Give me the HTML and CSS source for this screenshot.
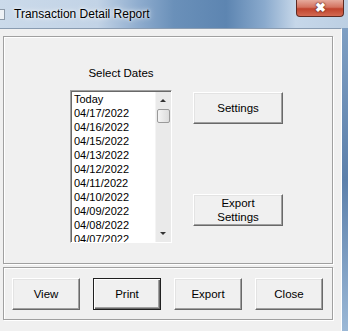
FILE: index.html
```html
<html lang="en">
<head>
    <meta charset="UTF-8">
    <title>Transaction Detail Report</title>
    <link rel="stylesheet" href="styles.css">
</head>
<body>
    <div class="titlebar">
        <div class="app-icon"></div>
        <div class="title-text">Transaction Detail Report</div>
        <div class="close-btn">&#10006;</div>
    </div>
    <div class="frame">
        <div class="window-body">
            <div class="group top-group">
                <div class="dates-col">
                    <div class="dates-label">Select Dates</div>
                    <div class="listbox">
                        <ul class="dates">
                            <li>Today</li>
                            <li>04/17/2022</li>
                            <li>04/16/2022</li>
                            <li>04/15/2022</li>
                            <li>04/13/2022</li>
                            <li>04/12/2022</li>
                            <li>04/11/2022</li>
                            <li>04/10/2022</li>
                            <li>04/09/2022</li>
                            <li>04/08/2022</li>
                            <li>04/07/2022</li>
                        </ul>
                        <div class="scrollbar">
                            <div class="arrow up"></div>
                            <div class="thumb"></div>
                            <div class="track"></div>
                            <div class="arrow down"></div>
                        </div>
                    </div>
                </div>
                <div class="side-col">
                    <button class="btn side-btn">Settings</button>
                    <button class="btn side-btn export-settings">Export<br>Settings</button>
                </div>
            </div>
            <div class="group bottom-group">
                <button class="btn action-btn">View</button>
                <button class="btn action-btn default-btn">Print</button>
                <button class="btn action-btn">Export</button>
                <button class="btn action-btn">Close</button>
            </div>
        </div>
        <div class="frame-edge"></div>
    </div>
</body>
</html>
```

FILE: styles.css
```css
body {
    margin: 0;
    width: 348px;
    height: 331px;
    overflow: hidden;
    background: #f0f0f0;
    font-family: "Liberation Sans", Arial, sans-serif;
    font-size: 11px;
    color: #000;
}
.titlebar {
    height: 28px;
    display: flex;
    align-items: flex-start;
    background: linear-gradient(to right, #cbdaea 0%, #c2d3e6 28%, #8eacce 40%, #6a90b9 50%, #5d85b1 65%, #8aaacd 76%, #c6d7e9 85%, #bccfe3 100%);
}
.app-icon {
    width: 4px;
    height: 9px;
    margin-top: 9px;
    background: #eef2f6;
    border: 1px solid #8d9aa8;
    border-left: none;
}
.title-text {
    margin-left: 9px;
    padding-top: 7px;
    font-size: 12px;
    text-shadow: 0 0 6px #fff, 0 0 3px #fff;
}
.close-btn {
    margin-left: auto;
    margin-right: 4px;
    width: 46px;
    height: 16px;
    border: 1px solid #5e2a22;
    border-top: none;
    border-radius: 0 0 4px 4px;
    background: linear-gradient(#e6aa9c, #d47360 45%, #c0432d 55%, #d36a52);
    color: #fff;
    font-size: 13px;
    font-weight: bold;
    text-align: center;
    line-height: 16px;
    text-shadow: 0 0 1px #5a1c12, 0 0 2px #5a1c12;
}
.frame {
    display: flex;
    height: 303px;
}
.window-body {
    width: 342px;
    border-top: 1px solid #8a9cb1;
    border-right: 1px solid #fff;
    padding: 7px 0 0 3px;
    box-sizing: border-box;
}
.frame-edge {
    flex: 1;
    background: linear-gradient(#7f9fc3, #5c80ab 50%, #9bb8d6);
}
.group {
    width: 330px;
    box-sizing: border-box;
    border: 1px solid #a0a0a0;
    box-shadow: inset 1px 1px 0 #fff, 1px 1px 0 #fff;
}
.top-group {
    height: 228px;
    display: flex;
    padding-left: 66px;
}
.dates-col {
    width: 102px;
    display: flex;
    flex-direction: column;
}
.dates-label {
    text-align: center;
    font-size: 11.5px;
    margin-top: 30px;
    height: 23px;
}
.listbox {
    height: 153px;
    display: flex;
    background: #fff;
    box-sizing: border-box;
    border: 1px solid;
    border-color: #a0a0a0 #fff #fff #a0a0a0;
    box-shadow: inset 1px 1px 0 #696969;
    overflow: hidden;
}
.dates {
    list-style: none;
    margin: 0;
    padding: 1px 0 0 3px;
    flex: 1;
    line-height: 14px;
}
.scrollbar {
    width: 15px;
    margin: 1px 0 0 0;
    display: flex;
    flex-direction: column;
    background: #eaeaea;
    border-left: 1px solid #f4f4f4;
}
.arrow {
    height: 17px;
    position: relative;
}
.arrow::after {
    content: "";
    position: absolute;
    left: 4px;
    border-left: 3px solid transparent;
    border-right: 3px solid transparent;
}
.arrow.up::after {
    top: 7px;
    border-bottom: 3px solid #333;
}
.arrow.down::after {
    top: 7px;
    border-top: 3px solid #333;
}
.thumb {
    height: 14px;
    margin: 0 1px;
    box-sizing: border-box;
    border: 1px solid #9a9a9a;
    border-radius: 2px;
    background: linear-gradient(to right, #f4f4f4, #dcdcdc);
}
.track {
    flex: 1;
}
.side-col {
    display: flex;
    flex-direction: column;
    margin-left: 21px;
    padding-top: 55px;
}
.btn {
    font-family: "Liberation Sans", Arial, sans-serif;
    font-size: 11.5px;
    color: #000;
    background: #f0f0f0;
    box-sizing: border-box;
    border: 1px solid;
    border-color: #fff #696969 #696969 #fff;
    box-shadow: inset -1px -1px 0 #a0a0a0, inset 1px 1px 0 #e3e3e3;
    padding: 0;
    line-height: 14px;
}
.side-btn {
    width: 90px;
    height: 32px;
}
.export-settings {
    margin-top: 70px;
}
.bottom-group {
    height: 53px;
    margin-top: 3px;
    display: flex;
    gap: 13px;
    padding: 10px 0 0 8px;
}
.action-btn {
    width: 68px;
    height: 32px;
}
.default-btn {
    border: 1px solid #202020;
    box-shadow: inset 1px 1px 0 #fff, inset -1px -1px 0 #696969, inset -2px -2px 0 #a0a0a0;
}
```
